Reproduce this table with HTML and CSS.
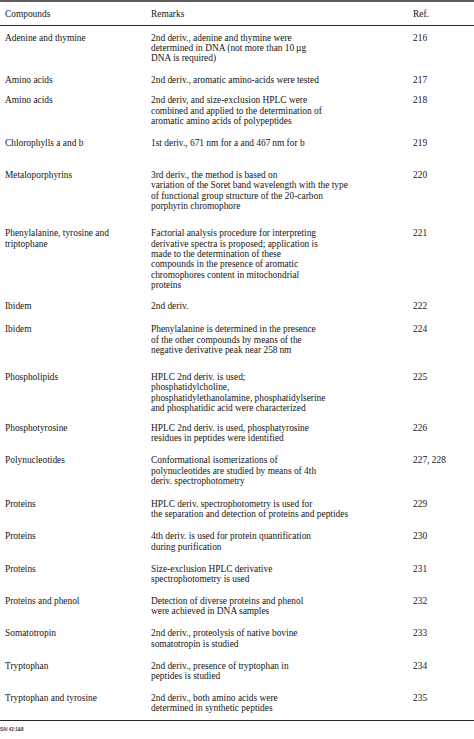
FILE: index.html
```html
<!DOCTYPE html>
<html>
<head>
<meta charset="utf-8">
<link rel="stylesheet" href="styles.css">
</head>
<body>
<div class="page">
  <div class="toprule"></div>
  <div class="row head">
    <div class="c1">Compounds</div>
    <div class="c2">Remarks</div>
    <div class="c3">Ref.</div>
  </div>
  <div class="body">
    <div class="row">
      <div class="c1">Adenine and thymine</div>
      <div class="c2">2nd deriv., adenine and thymine were<br>determined in DNA (not more than 10&thinsp;µg<br>DNA is required)</div>
      <div class="c3">216</div>
    </div>
    <div class="row tight">
      <div class="c1">Amino acids</div>
      <div class="c2">2nd deriv., aromatic amino-acids were tested</div>
      <div class="c3">217</div>
    </div>
    <div class="row">
      <div class="c1">Amino acids</div>
      <div class="c2">2nd deriv, and size-exclusion HPLC were<br>combined and applied to the determination of<br>aromatic amino acids of polypeptides</div>
      <div class="c3">218</div>
    </div>
    <div class="row xl">
      <div class="c1">Chlorophylls a and b</div>
      <div class="c2">1st deriv., 671 nm for a and 467&thinsp;nm for b</div>
      <div class="c3">219</div>
    </div>
    <div class="row lg">
      <div class="c1">Metaloporphyrins</div>
      <div class="c2">3rd deriv., the method is based on<br>variation of the Soret band wavelength with the type<br>of functional group structure of the 20-carbon<br>porphyrin chromophore</div>
      <div class="c3">220</div>
    </div>
    <div class="row snug">
      <div class="c1">Phenylalanine, tyrosine and<br>triptophane</div>
      <div class="c2">Factorial analysis procedure for interpreting<br>derivative spectra is proposed; application is<br>made to the determination of these<br>compounds in the presence of aromatic<br>chromophores content in mitochondrial<br>proteins</div>
      <div class="c3">221</div>
    </div>
    <div class="row roomy">
      <div class="c1">Ibidem</div>
      <div class="c2">2nd deriv.</div>
      <div class="c3">222</div>
    </div>
    <div class="row lg">
      <div class="c1">Ibidem</div>
      <div class="c2">Phenylalanine is determined in the presence<br>of the other compounds by means of the<br>negative derivative peak near 258&thinsp;nm</div>
      <div class="c3">224</div>
    </div>
    <div class="row tight">
      <div class="c1">Phospholipids</div>
      <div class="c2">HPLC 2nd deriv. is used;<br>phosphatidylcholine,<br>phosphatidylethanolamine, phosphatidylserine<br>and phosphatidic acid were characterized</div>
      <div class="c3">225</div>
    </div>
    <div class="row">
      <div class="c1">Phosphotyrosine</div>
      <div class="c2">HPLC 2nd deriv. is used, phosphatyrosine<br>residues in peptides were identified</div>
      <div class="c3">226</div>
    </div>
    <div class="row roomy">
      <div class="c1">Polynucleotides</div>
      <div class="c2">Conformational isomerizations of<br>polynucleotides are studied by means of 4th<br>deriv. spectrophotometry</div>
      <div class="c3">227, 228</div>
    </div>
    <div class="row">
      <div class="c1">Proteins</div>
      <div class="c2">HPLC deriv. spectrophotometry is used for<br>the separation and detection of proteins and peptides</div>
      <div class="c3">229</div>
    </div>
    <div class="row">
      <div class="c1">Proteins</div>
      <div class="c2">4th deriv. is used for protein quantification<br>during purification</div>
      <div class="c3">230</div>
    </div>
    <div class="row">
      <div class="c1">Proteins</div>
      <div class="c2">Size-exclusion HPLC derivative<br>spectrophotometry is used</div>
      <div class="c3">231</div>
    </div>
    <div class="row">
      <div class="c1">Proteins and phenol</div>
      <div class="c2">Detection of diverse proteins and phenol<br>were achieved in DNA samples</div>
      <div class="c3">232</div>
    </div>
    <div class="row">
      <div class="c1">Somatotropin</div>
      <div class="c2">2nd deriv., proteolysis of native bovine<br>somatotropin is studied</div>
      <div class="c3">233</div>
    </div>
    <div class="row">
      <div class="c1">Tryptophan</div>
      <div class="c2">2nd deriv., presence of tryptophan in<br>peptides is studied</div>
      <div class="c3">234</div>
    </div>
    <div class="row last">
      <div class="c1">Tryptophan and tyrosine</div>
      <div class="c2">2nd deriv., both amino acids were<br>determined in synthetic peptides</div>
      <div class="c3">235</div>
    </div>
  </div>
  <div class="footer">SAI 42:1&amp;8</div>
</div>
</body>
</html>
```
FILE: styles.css
```css
html, body {
  margin: 0;
  padding: 0;
  background: #ffffff;
}
.page {
  width: 474px;
  height: 739px;
  overflow: hidden;
  font-family: "Liberation Serif", "Times New Roman", serif;
  font-size: 9.4px;
  line-height: 10.4px;
  color: #161616;
}
.toprule {
  height: 2px;
  background: #5e5e5e;
}
.row {
  display: grid;
  grid-template-columns: 146px 262px 1fr;
  padding-left: 5px;
  padding-bottom: 11.5px;
  white-space: nowrap;
}
.row.tight { padding-bottom: 9.5px; }
.row.snug { padding-bottom: 10.6px; }
.row.roomy { padding-bottom: 12.5px; }
.row.lg { padding-bottom: 16.6px; }
.row.xl { padding-bottom: 21.6px; }
.row.last { padding-bottom: 6.4px; }
.row.head {
  padding-top: 6.8px;
  padding-bottom: 5.6px;
  border-bottom: 1px solid #2a2a2a;
}
.body {
  padding-top: 6.8px;
  border-bottom: 1px solid #2a2a2a;
}
.footer {
  padding-top: 6px;
  font-family: "Liberation Sans", Arial, sans-serif;
  font-size: 4.5px;
  line-height: 5px;
  font-weight: bold;
  color: #333;
}
```
